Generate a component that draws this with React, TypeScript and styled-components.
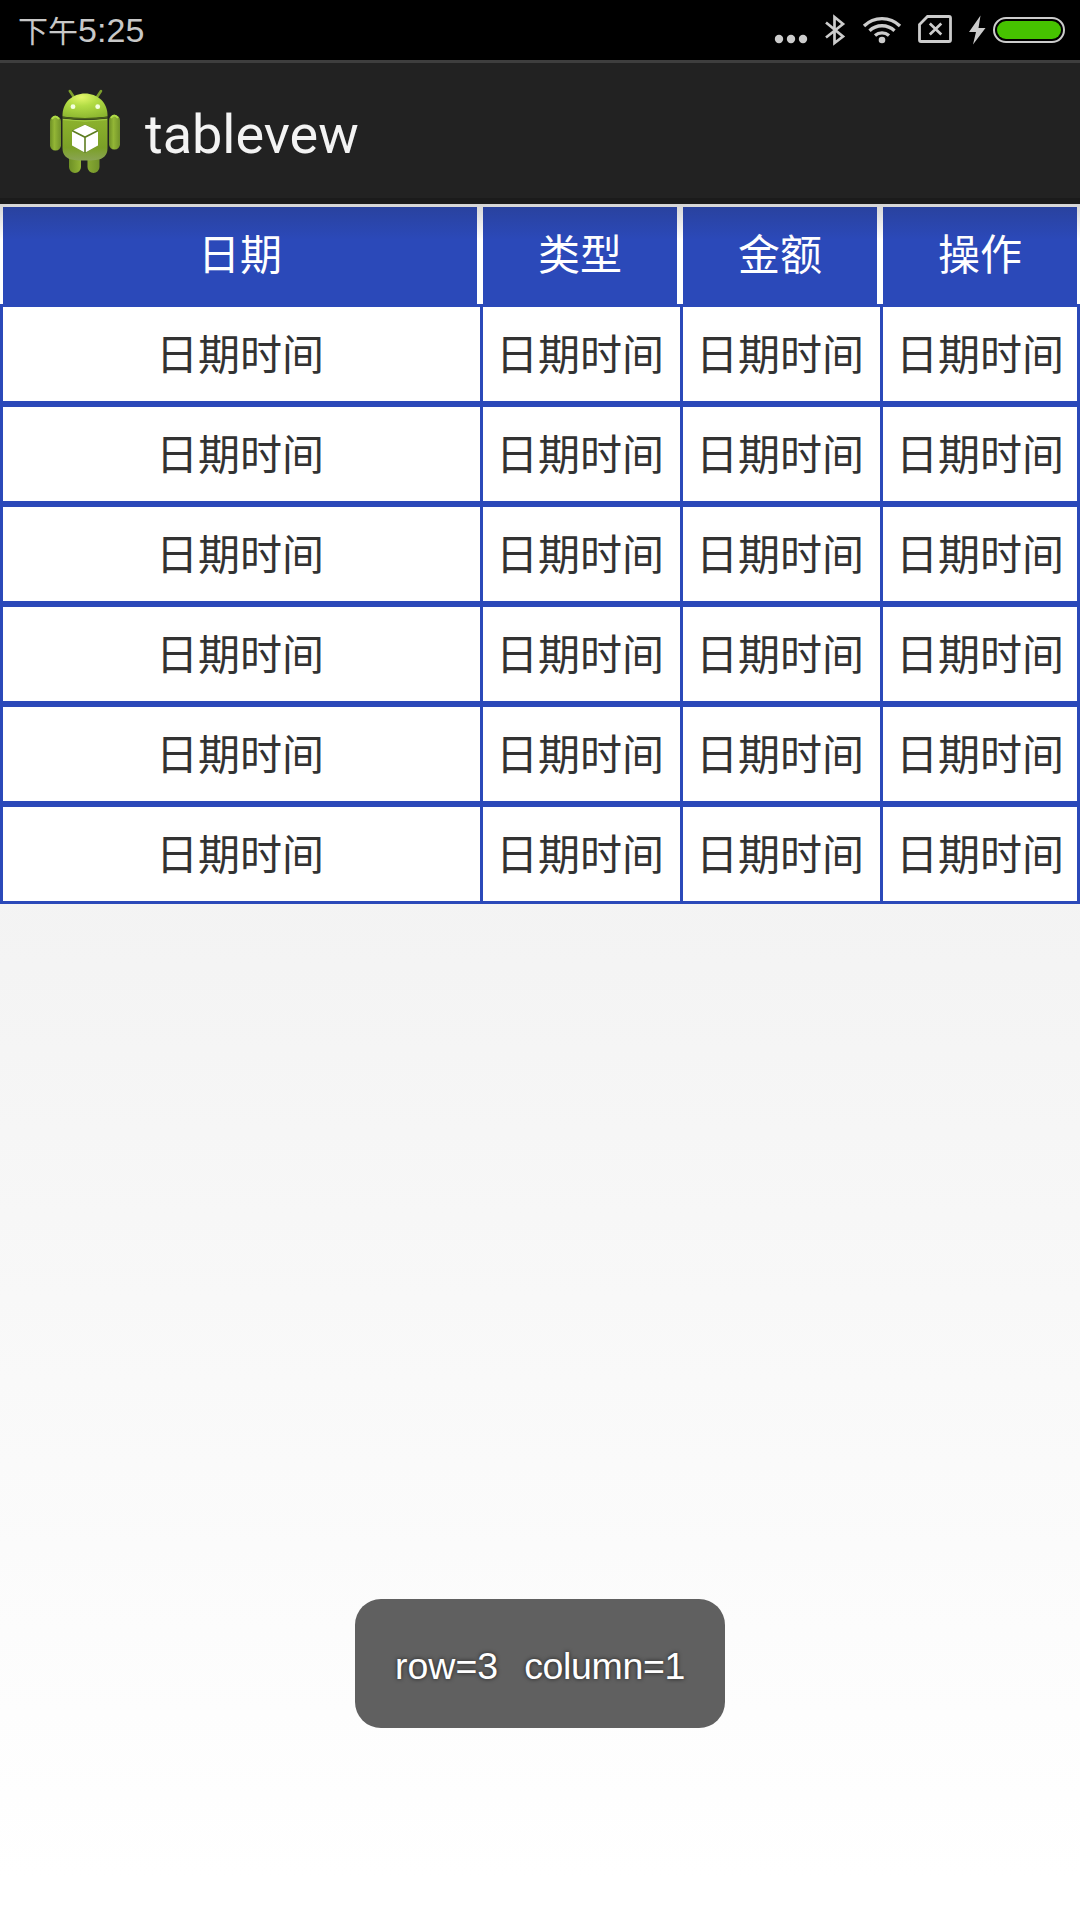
import React from "react";
import styled, { createGlobalStyle } from "styled-components";

const BLUE = "#2b49b9";
const CJK = '"Noto Sans CJK SC"';

const Global = createGlobalStyle`
  * { box-sizing: border-box; }
  body { margin: 0; background: #fff; }
`;

const Screen = styled.div`
  position: relative;
  display: flex;
  flex-direction: column;
  width: 1080px;
  height: 1920px;
  overflow: hidden;
  background: linear-gradient(#f3f3f3 883px, #fff 1878px);
`;

const StatusBar = styled.header`
  display: flex;
  align-items: center;
  justify-content: space-between;
  height: 60px;
  padding-left: 18px;
  background: #000;
  color: #c8c8c8;
`;

const Clock = styled.div`
  display: flex;
  align-items: center;
  height: 60px;
  font-family: "Liberation Sans", ${CJK}, sans-serif;
  font-size: 34px;
  line-height: 60px;
  letter-spacing: 0.1px;
`;

const Period = styled.span`
  margin-top: -2px;
  font-family: ${CJK}, sans-serif;
  font-weight: 400;
  font-size: 30px;
  line-height: 60px;
  letter-spacing: 0;
`;

const StatusIcons = styled.svg`
  display: block;
  width: 320px;
  height: 60px;
`;

const ActionBar = styled.div`
  display: flex;
  align-items: center;
  height: 144px;
  padding-left: 42px;
  gap: 15px;
  background: #222;
  border-top: 3px solid #3e3e3e;
  border-bottom: 6px solid #1b1b1b;
`;

const AppIcon = styled.svg`
  width: 88px;
  height: 96px;
  margin-top: 2px;
`;

const Title = styled.h1`
  margin: 0;
  font: 400 54px/64px Roboto, sans-serif;
  color: #f3f3f3;
  padding-top: 8px;
`;

const Table = styled.main`
  display: flex;
  flex-direction: column;
`;

const Row = styled.div`
  display: grid;
  grid-template-columns: 480px 200px 200px 200px;
  height: 100px;
  font: 400 42px/60px ${CJK}, sans-serif;
`;

const HeadRow = styled(Row)`
  position: relative;
  &::after {
    content: "";
    position: absolute;
    inset: 0 0 auto;
    height: 36px;
    background: linear-gradient(rgba(34, 34, 34, 0.19), rgba(34, 34, 34, 0));
  }
`;

const HeadCell = styled.div`
  display: flex;
  align-items: center;
  justify-content: center;
  border: 3px solid #fff;
  border-bottom: 0;
  padding-bottom: 8px;
  background: ${BLUE};
  color: #fff;
`;

const Cell = styled.div`
  display: flex;
  align-items: center;
  justify-content: center;
  border: 3px solid ${BLUE};
  border-right-width: 0;
  padding: 0 3px 5px 0;
  background: #fff;
  color: #333;
  &:last-child {
    border-right-width: 3px;
    padding-right: 0;
  }
`;

const Toast = styled.div`
  position: absolute;
  left: 355px;
  top: 1599px;
  width: 370px;
  height: 129px;
  display: flex;
  align-items: center;
  gap: 26px;
  padding: 4px 0 0 40px;
  border-radius: 26px;
  background: #606060;
  color: #fff;
  font: 400 37.500px/48px "Liberation Sans", Arial, sans-serif;
  text-shadow: 0 0 4px rgba(0, 0, 0, 0.7);
`;

const ToastPart = styled.span<{ $tracking: number }>`
  letter-spacing: ${(p) => p.$tracking}px;
`;

const HEADERS = ["日期", "类型", "金额", "操作"];
const ROWS = Array.from({ length: 6 }, () => Array(4).fill("日期时间") as string[]);

function Indicators() {
  return (
    <StatusIcons viewBox="0 0 320 60" fill="none" stroke="#ccc">
      <g fill="#ccc" stroke="none">
        <circle cx="19" cy="39" r="4.2" />
        <circle cx="31" cy="39" r="4.2" />
        <circle cx="43" cy="39" r="4.2" />
        <circle cx="122" cy="40" r="3.3" />
        <path d="M220.5 15.5 209 32h7l-3 12.500L225.5 28h-7z" />
      </g>
      <path d="M66 22.500 83 36.500 74.500 43V17L83 24 66 37.500" strokeWidth="2.7" />
      <path d="M104 26a25.500 25.500 0 0 1 36 0M109.500 30.800a18 18 0 0 1 25 0M115 35.600a10.500 10.500 0 0 1 14 0" strokeWidth="3.3" />
      <path d="M167.500 16.500H189q1.500 0 1.500 1.500v22q0 1.500-1.500 1.500H161q-1.500 0-1.500-1.500V24.500z" strokeWidth="2.8" />
      <path d="m169.800 23.500 11.500 11M181.300 23.500l-11.500 11" strokeWidth="2.7" />
      <rect x="234" y="18" width="70" height="24" rx="12" strokeWidth="2" />
      <rect x="237" y="21" width="64" height="18" rx="9" fill="#46c300" stroke="none" />
    </StatusIcons>
  );
}

function Robot() {
  return (
    <AppIcon viewBox="42 84 88 96">
      <defs>
        <linearGradient id="limb" x1="0" y1="0" x2="1" y2="0">
          <stop offset="0" stopColor="#6d8f25" />
          <stop offset="0.4" stopColor="#93b636" />
          <stop offset="1" stopColor="#71922a" />
        </linearGradient>
        <linearGradient id="torso" x1="0" y1="0" x2="0" y2="1">
          <stop offset="0" stopColor="#8cb22d" />
          <stop offset="0.7" stopColor="#7ba027" />
          <stop offset="1" stopColor="#8aa454" />
        </linearGradient>
        <radialGradient id="head" cx="0.42" cy="0.15" r="0.9">
          <stop offset="0" stopColor="#e4f76a" />
          <stop offset="0.4" stopColor="#b2dc45" />
          <stop offset="1" stopColor="#8bb52f" />
        </radialGradient>
      </defs>
      <path d="m69.800 91 4 6M101 91l-4 6" stroke="#7c9e2c" strokeWidth="2.600" strokeLinecap="round" />
      <path d="M69 156h12v11a6 6 0 0 1-12 0zM87.500 156h12v11a6 6 0 0 1-12 0z" fill="url(#limb)" />
      <rect x="50" y="116" width="11" height="34.500" rx="5.300" fill="url(#limb)" />
      <rect x="109" y="115" width="11" height="34.500" rx="5.300" fill="url(#limb)" />
      <path d="M52 119q3-5 7 0M111 118q3-5 7 0" stroke="#b0dc49" strokeWidth="2" fill="none" />
      <path d="M62.500 118.500q22.500 3 45 0V148q0 11-12 12-10.500 1-21 0-12-1-12-12z" fill="url(#torso)" />
      <path d="M62.500 116.500C62 102 73 93.500 85 93.500s23 8.500 22.500 23q-22.500 3-45 0z" fill="url(#head)" />
      <path d="M63 119.600q22 3 44 0" stroke="#a6cf48" strokeWidth="1" fill="none" />
      <path d="M62.500 117.600q22.500 2.400 45 0" stroke="#49601a" strokeWidth="1.500" fill="none" />
      <circle cx="73" cy="106.700" r="2.400" fill="#f4ffe0" />
      <circle cx="97.700" cy="106.700" r="2.400" fill="#f4ffe0" />
      <path d="m85 124.500 13 6v15L85 153l-13-7.500v-15z" fill="#5d7d20" />
      <path d="m85 124.700 11.800 5.600L85 136.200l-11.800-5.900z" fill="#fff" />
      <path d="m72 131.500 12.200 6.200v14.600L72 145.400zM98 131.500l-12.200 6.200v14.600l12.200-6.900z" fill="#fff" />
    </AppIcon>
  );
}

export default function App() {
  return (
    <Screen>
      <Global />
      <StatusBar>
        <Clock>
          <Period>下午</Period>5:25
        </Clock>
        <Indicators />
      </StatusBar>
      <ActionBar>
        <Robot />
        <Title>tablevew</Title>
      </ActionBar>
      <Table>
        <HeadRow>
          {HEADERS.map((label) => (
            <HeadCell key={label}>{label}</HeadCell>
          ))}
        </HeadRow>
        {ROWS.map((cells, r) => (
          <Row key={r}>
            {cells.map((text, c) => (
              <Cell key={c}>{text}</Cell>
            ))}
          </Row>
        ))}
      </Table>
      <Toast>
        <ToastPart $tracking={0}>row=3</ToastPart>
        <ToastPart $tracking={-0.35}>column=1</ToastPart>
      </Toast>
    </Screen>
  );
}
